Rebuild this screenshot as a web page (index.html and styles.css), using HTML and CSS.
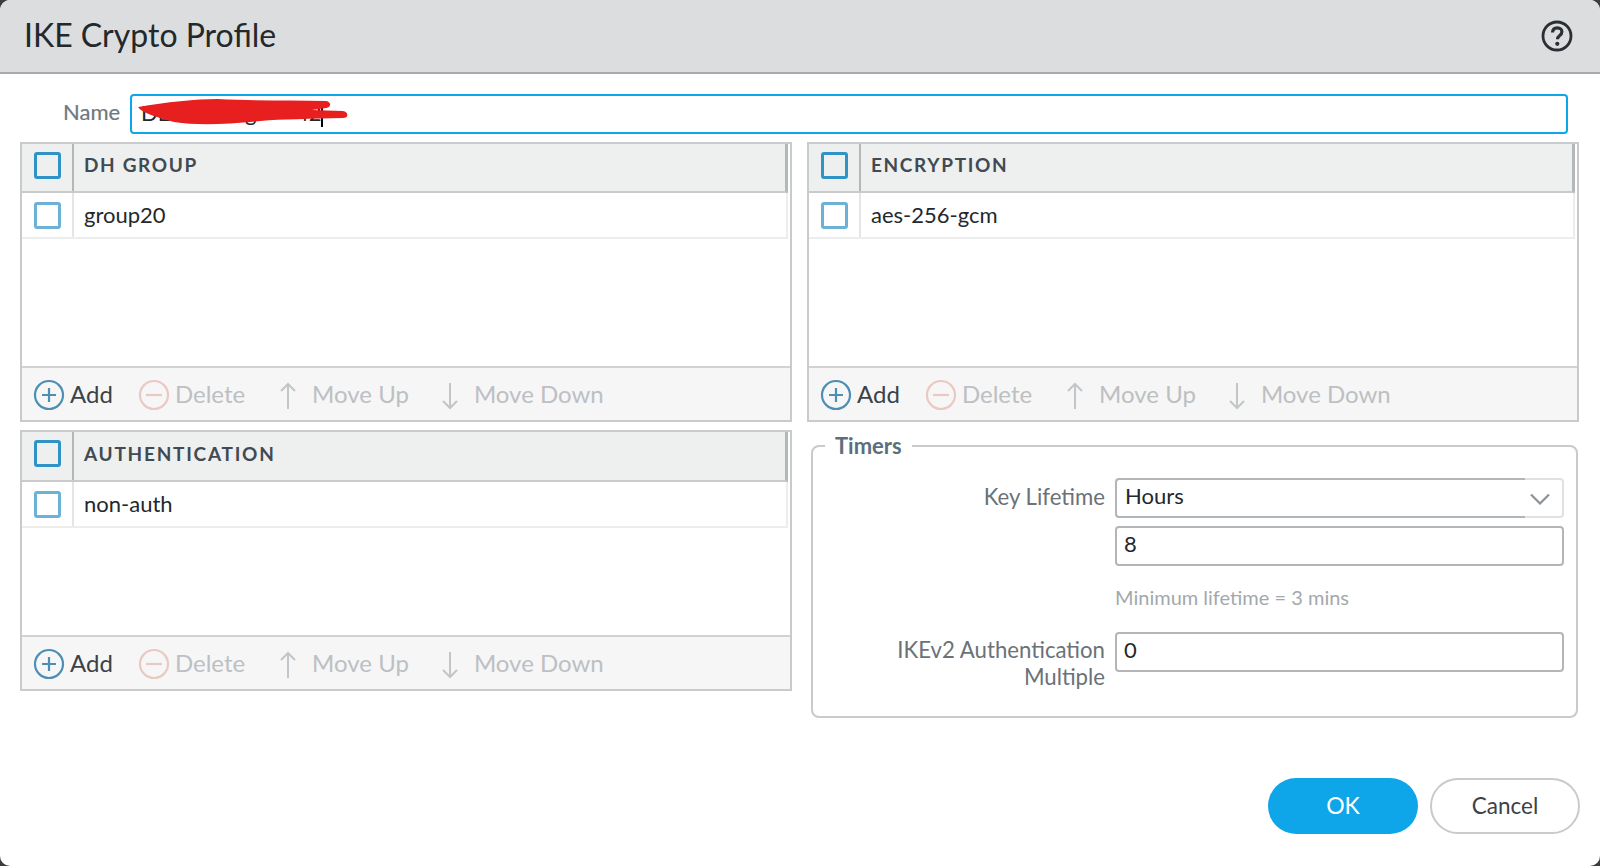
FILE: index.html
```html
<!DOCTYPE html>
<html lang="en">
<head>
<meta charset="utf-8">
<title>IKE Crypto Profile</title>
<link rel="stylesheet" href="styles.css">
</head>
<body>
<div class="dialog">
  <header class="titlebar">
    <h1 class="title">IKE Crypto Profile</h1>
    <svg class="help" viewBox="0 0 32 32" width="32" height="32"><circle cx="16" cy="16" r="14" fill="none" stroke="#2b2f33" stroke-width="2.800"/><path d="M11.500 12.500c.2-3 2.200-4.700 4.800-4.700 2.700 0 4.600 1.700 4.600 4 0 1.900-1 2.900-2.400 3.900-1.300 1-2 1.700-2 3.500" fill="none" stroke="#2b2f33" stroke-width="3.200"/><circle cx="16.300" cy="23.800" r="2.100" fill="#2b2f33"/></svg>
  </header>
  <div class="name-row">
    <label class="name-label">Name</label>
    <div class="name-input">
      <span class="name-value">DEE&nbsp;&nbsp;&nbsp;&nbsp;&nbsp;&nbsp;&nbsp;&nbsp;&nbsp;&nbsp;&nbsp;g&nbsp;&nbsp;&nbsp;&nbsp;&nbsp;&nbsp;&nbsp;42</span><span class="caret"></span>
      <svg class="scribble" viewBox="0 0 210 28" width="216" height="28" preserveAspectRatio="none"><path d="M3 9C30 4 60 1 80 1c40 2 70 1 106 2 5 1 5 6 0 7l-14 2 30 1c6 1 6 7 0 7-30 1-60 1-80 3-30 3-60 5-84 1C24 20 6 15 3 9z" fill="#e81f1f"/></svg>
    </div>
  </div>
  <div class="columns">
    <div class="col">
      <section class="panel panel-a">
        <div class="grid-head"><div class="cb-cell"><span class="cb cb-head"></span></div><div class="head-text">DH GROUP</div></div>
        <div class="grid-row"><div class="cb-cell"><span class="cb"></span></div><div class="cell-text">group20</div></div>
        <div class="grid-fill"></div>
        <div class="toolbar">
          <span class="tool on"><svg class="ti" viewBox="0 0 32 32"><circle cx="16" cy="16" r="14" fill="none" stroke="#4d8fb4" stroke-width="2.200"/><path d="M16 9v14M9 16h14" stroke="#4d8fb4" stroke-width="2.200"/></svg>Add</span>
          <span class="tool"><svg class="ti" viewBox="0 0 32 32"><circle cx="16" cy="16" r="14" fill="none" stroke="#eac8c4" stroke-width="2.200"/><path d="M8 16h16" stroke="#eac8c4" stroke-width="2.200"/></svg>Delete</span>
          <span class="tool tool-up"><svg class="ta" viewBox="0 0 20 28"><path d="M10 27V2M3 9 10 2l7 7" fill="none" stroke="#c2c6c8" stroke-width="2"/></svg>Move Up</span>
          <span class="tool"><svg class="ta" viewBox="0 0 20 28"><path d="M10 1v25M3 19l7 7 7-7" fill="none" stroke="#c2c6c8" stroke-width="2"/></svg>Move Down</span>
        </div>
      </section>
      <section class="panel panel-b">
        <div class="grid-head"><div class="cb-cell"><span class="cb cb-head"></span></div><div class="head-text">AUTHENTICATION</div></div>
        <div class="grid-row"><div class="cb-cell"><span class="cb"></span></div><div class="cell-text">non-auth</div></div>
        <div class="grid-fill"></div>
        <div class="toolbar">
          <span class="tool on"><svg class="ti" viewBox="0 0 32 32"><circle cx="16" cy="16" r="14" fill="none" stroke="#4d8fb4" stroke-width="2.200"/><path d="M16 9v14M9 16h14" stroke="#4d8fb4" stroke-width="2.200"/></svg>Add</span>
          <span class="tool"><svg class="ti" viewBox="0 0 32 32"><circle cx="16" cy="16" r="14" fill="none" stroke="#eac8c4" stroke-width="2.200"/><path d="M8 16h16" stroke="#eac8c4" stroke-width="2.200"/></svg>Delete</span>
          <span class="tool tool-up"><svg class="ta" viewBox="0 0 20 28"><path d="M10 27V2M3 9 10 2l7 7" fill="none" stroke="#c2c6c8" stroke-width="2"/></svg>Move Up</span>
          <span class="tool"><svg class="ta" viewBox="0 0 20 28"><path d="M10 1v25M3 19l7 7 7-7" fill="none" stroke="#c2c6c8" stroke-width="2"/></svg>Move Down</span>
        </div>
      </section>
    </div>
    <div class="col">
      <section class="panel panel-a">
        <div class="grid-head"><div class="cb-cell"><span class="cb cb-head"></span></div><div class="head-text">ENCRYPTION</div></div>
        <div class="grid-row"><div class="cb-cell"><span class="cb"></span></div><div class="cell-text">aes-256-gcm</div></div>
        <div class="grid-fill"></div>
        <div class="toolbar">
          <span class="tool on"><svg class="ti" viewBox="0 0 32 32"><circle cx="16" cy="16" r="14" fill="none" stroke="#4d8fb4" stroke-width="2.200"/><path d="M16 9v14M9 16h14" stroke="#4d8fb4" stroke-width="2.200"/></svg>Add</span>
          <span class="tool"><svg class="ti" viewBox="0 0 32 32"><circle cx="16" cy="16" r="14" fill="none" stroke="#eac8c4" stroke-width="2.200"/><path d="M8 16h16" stroke="#eac8c4" stroke-width="2.200"/></svg>Delete</span>
          <span class="tool tool-up"><svg class="ta" viewBox="0 0 20 28"><path d="M10 27V2M3 9 10 2l7 7" fill="none" stroke="#c2c6c8" stroke-width="2"/></svg>Move Up</span>
          <span class="tool"><svg class="ta" viewBox="0 0 20 28"><path d="M10 1v25M3 19l7 7 7-7" fill="none" stroke="#c2c6c8" stroke-width="2"/></svg>Move Down</span>
        </div>
      </section>
      <fieldset class="timers">
        <legend class="timers-legend">Timers</legend>
        <div class="form-row form-row-a">
          <label class="form-label">Key Lifetime</label>
          <div class="form-field">
            <div class="select"><span class="select-value">Hours</span><span class="select-btn"><svg viewBox="0 0 20 12" width="20" height="12"><path d="M1 1.500 10 10.500 19 1.500" fill="none" stroke="#8d9296" stroke-width="2.200"/></svg></span></div>
            <div class="input input-gap">8</div>
            <div class="hint">Minimum lifetime = 3 mins</div>
          </div>
        </div>
        <div class="form-row form-row-b">
          <label class="form-label">IKEv2 Authentication Multiple</label>
          <div class="form-field"><div class="input">0</div></div>
        </div>
      </fieldset>
    </div>
  </div>
  <footer class="actions">
    <button class="btn btn-ok">OK</button>
    <button class="btn btn-cancel">Cancel</button>
  </footer>
</div>
</body>
</html>
```
FILE: styles.css
```css
* { box-sizing: border-box; }
html, body { margin: 0; height: 100%; }
body { background: #3a3d40; font-family: Lato, "Open Sans", sans-serif; overflow: hidden; }
.dialog { width: 1600px; height: 866px; background: #fff; border-radius: 10px; display: flex; flex-direction: column; overflow: hidden; }
.titlebar { height: 74px; flex: none; background: #dcdddf; border-bottom: 2px solid #a7aaad; display: flex; align-items: center; justify-content: space-between; padding: 0 27px 4px 24px; }
.title { margin: 0; font-weight: 400; font-size: 32px; color: #23282c; }
.help { display: block; margin-top: 4px; }
.name-row { display: flex; align-items: center; margin-top: 20px; height: 40px; padding-left: 63px; }
.name-label { width: 67px; font-size: 22px; color: #6f7880; padding-bottom: 6px; -webkit-text-stroke: 0.2px #6f7880; }
.name-input { position: relative; width: 1438px; height: 40px; border: 2px solid #0ea5e9; border-radius: 4px; padding: 0 0 3px 9px; font-size: 22px; color: #23282c; display: flex; align-items: center; }
.caret { display: inline-block; width: 1.500px; height: 20px; background: #000; margin-top: 8px; }
.scribble { position: absolute; left: 3px; top: 2px; }
.columns { display: grid; grid-template-columns: 772px 772px; column-gap: 15px; margin: 8px 0 0 20px; }
.col { display: flex; flex-direction: column; gap: 8px; }
.panel { border: 2px solid #c8cacc; display: flex; flex-direction: column; }
.panel-a { height: 280px; }
.panel-b { height: 261px; }
.grid-head { display: flex; height: 49px; flex: none; background: #eeefef; border-bottom: 2px solid #c8cacc; border-right: 3px solid #b5b8bb; margin-right: 2px; }
.panel-b .grid-head { height: 50px; }
.grid-row { display: flex; height: 46px; flex: none; border-bottom: 2px solid #eceded; border-right: 2px solid #eceded; margin-right: 2px; }
.cb-cell { width: 52px; flex: none; border-right: 2px solid #b4b7ba; display: flex; align-items: center; justify-content: center; }
.grid-head .cb-cell { padding-bottom: 5px; }
.grid-row .cb-cell { border-right-color: #e4e5e6; }
.cb { width: 27px; height: 27px; border: 3px solid #6cb1d6; border-radius: 3px; background: #fff; display: block; }
.cb-head { border: 3.500px solid #2f93c6; background: #eeefef; }
.head-text { padding: 0 0 7px 10px; display: flex; align-items: center; font-size: 19px; font-weight: 700; letter-spacing: 1.650px; color: #414a52; }
.panel-b .head-text { padding-bottom: 6px; letter-spacing: 1.750px; }
.cell-text { padding: 0 0 2px 10px; display: flex; align-items: center; font-size: 22px; color: #23282c; }
.grid-fill { flex: 1; }
.toolbar { height: 54px; flex: none; background: #f6f6f6; border-top: 2px solid #d0d2d4; display: flex; align-items: center; padding: 0 0 2px 11px; font-size: 24px; color: #bcc0c3; }
.tool { display: flex; align-items: center; height: 38px; margin-right: 25px; }
.tool-up { margin-right: 23px; }
.tool.on { color: #3b4248; }
.ti { width: 32px; height: 32px; margin: 4px 5px 0 0; }
.ta { width: 20px; height: 28px; margin: 6px 14px 0 8px; }
.timers { margin: 2px 0 0 4px; padding: 0 12px 0 0; width: 767px; height: 286px; border: 2px solid #c8cacc; border-radius: 8px; }
.timers-legend { margin-left: 12px; padding: 0 10px; font-size: 22px; font-weight: 700; color: #5c6f7c; }
.form-row { display: flex; }
.form-row-a { margin-top: 19px; }
.form-row-b { margin-top: 22px; }
.form-label { width: 302px; flex: none; text-align: right; font-size: 22.200px; line-height: 27px; color: #6a7278; padding: 5px 10px 0 0; }
.form-row-b .form-label { padding-top: 4px; }
.form-field { flex: 1; }
.select { height: 40px; display: flex; font-size: 22px; color: #23282c; }
.select-value { flex: 1; border: 2px solid #b3b6b9; border-right: none; border-radius: 4px 0 0 4px; padding: 0 0 5px 8px; display: flex; align-items: center; }
.select-btn { width: 39px; flex: none; border: 2px solid #e0e1e2; border-left: none; border-radius: 0 4px 4px 0; display: flex; align-items: center; justify-content: center; padding: 2px 8px 0 0; }
.input { height: 40px; border: 2px solid #b3b6b9; border-radius: 4px; display: flex; align-items: center; font-size: 22px; color: #23282c; padding: 0 0 5px 7px; }
.input-gap { margin-top: 8px; }
.hint { margin-top: 18px; font-size: 20px; line-height: 26px; color: #a3a8ac; }
.actions { display: flex; justify-content: flex-end; gap: 12px; padding-right: 20px; margin-top: auto; margin-bottom: 32px; }
.btn { width: 150px; height: 56px; border-radius: 28px; padding: 0 0 2px; font: 400 23px Lato, sans-serif; }
.btn-ok { background: #0ea5e9; border: none; color: #fff; }
.btn-cancel { background: #fff; border: 2px solid #c8cacc; color: #3b4248; font-size: 22.500px; }
```
